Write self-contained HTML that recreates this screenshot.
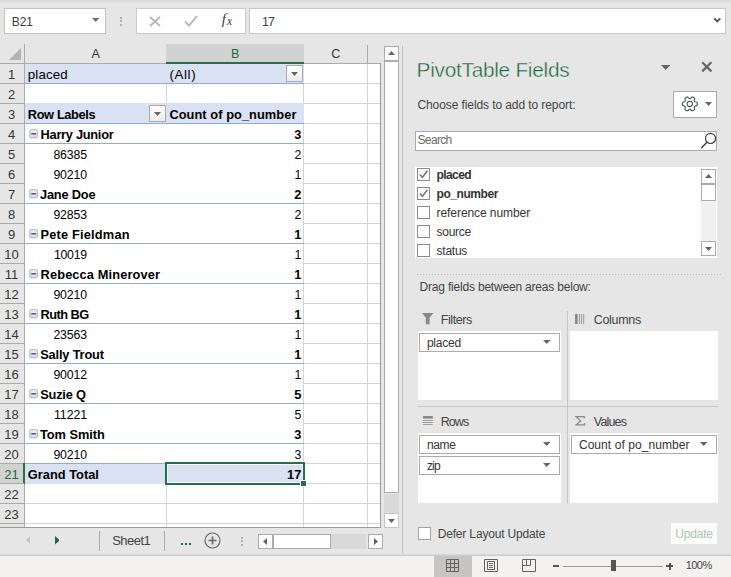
<!DOCTYPE html>
<html><head><meta charset="utf-8"><title>Excel PivotTable</title><style>
html,body{margin:0;padding:0;}
body{width:731px;height:577px;overflow:hidden;background:#e6e6e6;font-family:"Liberation Sans",sans-serif;}
#r{position:relative;width:731px;height:577px;overflow:hidden;background:#e6e6e6;}
#r>div,#r>span,#r>svg{position:absolute;display:block;}
.t{white-space:nowrap;}
</style></head><body><div id="r">
<div style="left:0px;top:0px;width:731px;height:4px;background:linear-gradient(#d7d7d7,#dedede 35%,#e4e4e4 75%,#e6e6e6)"></div>
<div style="left:4px;top:8px;width:102px;height:26px;background:#fff;border:1px solid #c2c2c0;box-sizing:border-box"></div>
<span class="t" style="left:11.7px;top:16.30px;font-size:12px;line-height:12px;font-weight:normal;color:#3b3b3b;letter-spacing:-0.020px;">B21</span>
<svg style="left:92px;top:18.2px" width="7.4" height="4" viewBox="0 0 7.4 4"><path d="M0 0H7.4L3.7 4Z" fill="#707070"/></svg>
<div style="left:120px;top:16.5px;width:2px;height:2px;background:#b0b0b0"></div>
<div style="left:120px;top:20.1px;width:2px;height:2px;background:#b0b0b0"></div>
<div style="left:120px;top:23.7px;width:2px;height:2px;background:#b0b0b0"></div>
<div style="left:136px;top:8px;width:110px;height:26px;background:#fff;border:1px solid #cacaca;box-sizing:border-box"></div>
<svg style="left:149px;top:16px" width="12" height="11" viewBox="0 0 12 11"><path d="M1 1L11 10M11 1L1 10" stroke="#b6b6b6" stroke-width="1.8" fill="none"/></svg>
<svg style="left:184.3px;top:15px" width="14" height="12" viewBox="0 0 14 12"><path d="M1 6.5L5 10.5L13 1" stroke="#b6b6b6" stroke-width="1.9" fill="none"/></svg>
<span class="t" style="left:221.8px;top:12.30px;font-size:15px;line-height:15px;font-weight:normal;color:#3c3c3c;font-family:'Liberation Serif';font-style:italic;">f</span>
<span class="t" style="left:227.0px;top:16.30px;font-size:11.5px;line-height:11.5px;font-weight:normal;color:#3c3c3c;font-family:'Liberation Serif';font-style:italic;">x</span>
<div style="left:249px;top:8px;width:477px;height:26px;background:#fff;border:1px solid #c8c8c8;box-sizing:border-box"></div>
<span class="t" style="left:261.90px;top:16.30px;font-size:12.3px;line-height:12.3px;font-weight:normal;color:#3b3b3b;letter-spacing:-0.739px;">17</span>
<svg style="left:713.4px;top:17.2px" width="9" height="7" viewBox="0 0 9 7"><path d="M1.1 1.3L4.2 4.5L7.3 1.3" stroke="#555" stroke-width="1.9" fill="none"/></svg>
<div style="left:25px;top:64px;width:356px;height:464px;background:#fff"></div>
<div style="left:0px;top:44px;width:381px;height:19px;background:#e6e6e6"></div>
<div style="left:166px;top:44px;width:138px;height:18px;background:#d2d2d2"></div>
<div style="left:166px;top:62px;width:138px;height:2px;background:#217346"></div>
<div style="left:0px;top:63px;width:166px;height:1px;background:#ababab"></div>
<div style="left:304px;top:63px;width:77px;height:1px;background:#ababab"></div>
<div style="left:24px;top:44px;width:1px;height:484px;background:#ababab"></div>
<div style="left:367px;top:45px;width:1px;height:18px;background:#ababab"></div>
<svg style="left:8.9px;top:48px" width="12" height="12" viewBox="0 0 12 12"><path d="M12 0V12H0Z" fill="#b2b2b2"/></svg>
<span class="t" style="left:95.8px;transform:translateX(-50%);top:48.30px;font-size:12.6px;line-height:12.6px;font-weight:normal;color:#363636;">A</span>
<span class="t" style="left:235.2px;transform:translateX(-50%);top:48.30px;font-size:12.6px;line-height:12.6px;font-weight:normal;color:#1c6b3f;">B</span>
<span class="t" style="left:335.8px;transform:translateX(-50%);top:48.30px;font-size:12.6px;line-height:12.6px;font-weight:normal;color:#363636;">C</span>
<div style="left:0px;top:83px;width:24px;height:1px;background:#ababab"></div>
<span class="t" style="left:11.6px;transform:translateX(-50%);top:68.30px;font-size:13px;line-height:13px;font-weight:normal;color:#363636;">1</span>
<div style="left:25px;top:83px;width:356px;height:1px;background:#d4d4d4"></div>
<div style="left:0px;top:103px;width:24px;height:1px;background:#ababab"></div>
<span class="t" style="left:11.6px;transform:translateX(-50%);top:88.30px;font-size:13px;line-height:13px;font-weight:normal;color:#363636;">2</span>
<div style="left:25px;top:103px;width:356px;height:1px;background:#d4d4d4"></div>
<div style="left:0px;top:123px;width:24px;height:1px;background:#ababab"></div>
<span class="t" style="left:11.6px;transform:translateX(-50%);top:108.30px;font-size:13px;line-height:13px;font-weight:normal;color:#363636;">3</span>
<div style="left:25px;top:123px;width:356px;height:1px;background:#d4d4d4"></div>
<div style="left:0px;top:143px;width:24px;height:1px;background:#ababab"></div>
<span class="t" style="left:11.6px;transform:translateX(-50%);top:128.30px;font-size:13px;line-height:13px;font-weight:normal;color:#363636;">4</span>
<div style="left:25px;top:143px;width:356px;height:1px;background:#d4d4d4"></div>
<div style="left:0px;top:163px;width:24px;height:1px;background:#ababab"></div>
<span class="t" style="left:11.6px;transform:translateX(-50%);top:148.30px;font-size:13px;line-height:13px;font-weight:normal;color:#363636;">5</span>
<div style="left:25px;top:163px;width:356px;height:1px;background:#d4d4d4"></div>
<div style="left:0px;top:183px;width:24px;height:1px;background:#ababab"></div>
<span class="t" style="left:11.6px;transform:translateX(-50%);top:168.30px;font-size:13px;line-height:13px;font-weight:normal;color:#363636;">6</span>
<div style="left:25px;top:183px;width:356px;height:1px;background:#d4d4d4"></div>
<div style="left:0px;top:203px;width:24px;height:1px;background:#ababab"></div>
<span class="t" style="left:11.6px;transform:translateX(-50%);top:188.30px;font-size:13px;line-height:13px;font-weight:normal;color:#363636;">7</span>
<div style="left:25px;top:203px;width:356px;height:1px;background:#d4d4d4"></div>
<div style="left:0px;top:223px;width:24px;height:1px;background:#ababab"></div>
<span class="t" style="left:11.6px;transform:translateX(-50%);top:208.30px;font-size:13px;line-height:13px;font-weight:normal;color:#363636;">8</span>
<div style="left:25px;top:223px;width:356px;height:1px;background:#d4d4d4"></div>
<div style="left:0px;top:243px;width:24px;height:1px;background:#ababab"></div>
<span class="t" style="left:11.6px;transform:translateX(-50%);top:228.30px;font-size:13px;line-height:13px;font-weight:normal;color:#363636;">9</span>
<div style="left:25px;top:243px;width:356px;height:1px;background:#d4d4d4"></div>
<div style="left:0px;top:263px;width:24px;height:1px;background:#ababab"></div>
<span class="t" style="left:11.6px;transform:translateX(-50%);top:248.30px;font-size:13px;line-height:13px;font-weight:normal;color:#363636;">10</span>
<div style="left:25px;top:263px;width:356px;height:1px;background:#d4d4d4"></div>
<div style="left:0px;top:283px;width:24px;height:1px;background:#ababab"></div>
<span class="t" style="left:11.6px;transform:translateX(-50%);top:268.30px;font-size:13px;line-height:13px;font-weight:normal;color:#363636;">11</span>
<div style="left:25px;top:283px;width:356px;height:1px;background:#d4d4d4"></div>
<div style="left:0px;top:303px;width:24px;height:1px;background:#ababab"></div>
<span class="t" style="left:11.6px;transform:translateX(-50%);top:288.30px;font-size:13px;line-height:13px;font-weight:normal;color:#363636;">12</span>
<div style="left:25px;top:303px;width:356px;height:1px;background:#d4d4d4"></div>
<div style="left:0px;top:323px;width:24px;height:1px;background:#ababab"></div>
<span class="t" style="left:11.6px;transform:translateX(-50%);top:308.30px;font-size:13px;line-height:13px;font-weight:normal;color:#363636;">13</span>
<div style="left:25px;top:323px;width:356px;height:1px;background:#d4d4d4"></div>
<div style="left:0px;top:343px;width:24px;height:1px;background:#ababab"></div>
<span class="t" style="left:11.6px;transform:translateX(-50%);top:328.30px;font-size:13px;line-height:13px;font-weight:normal;color:#363636;">14</span>
<div style="left:25px;top:343px;width:356px;height:1px;background:#d4d4d4"></div>
<div style="left:0px;top:363px;width:24px;height:1px;background:#ababab"></div>
<span class="t" style="left:11.6px;transform:translateX(-50%);top:348.30px;font-size:13px;line-height:13px;font-weight:normal;color:#363636;">15</span>
<div style="left:25px;top:363px;width:356px;height:1px;background:#d4d4d4"></div>
<div style="left:0px;top:383px;width:24px;height:1px;background:#ababab"></div>
<span class="t" style="left:11.6px;transform:translateX(-50%);top:368.30px;font-size:13px;line-height:13px;font-weight:normal;color:#363636;">16</span>
<div style="left:25px;top:383px;width:356px;height:1px;background:#d4d4d4"></div>
<div style="left:0px;top:403px;width:24px;height:1px;background:#ababab"></div>
<span class="t" style="left:11.6px;transform:translateX(-50%);top:388.30px;font-size:13px;line-height:13px;font-weight:normal;color:#363636;">17</span>
<div style="left:25px;top:403px;width:356px;height:1px;background:#d4d4d4"></div>
<div style="left:0px;top:423px;width:24px;height:1px;background:#ababab"></div>
<span class="t" style="left:11.6px;transform:translateX(-50%);top:408.30px;font-size:13px;line-height:13px;font-weight:normal;color:#363636;">18</span>
<div style="left:25px;top:423px;width:356px;height:1px;background:#d4d4d4"></div>
<div style="left:0px;top:443px;width:24px;height:1px;background:#ababab"></div>
<span class="t" style="left:11.6px;transform:translateX(-50%);top:428.30px;font-size:13px;line-height:13px;font-weight:normal;color:#363636;">19</span>
<div style="left:25px;top:443px;width:356px;height:1px;background:#d4d4d4"></div>
<div style="left:0px;top:463px;width:24px;height:1px;background:#ababab"></div>
<span class="t" style="left:11.6px;transform:translateX(-50%);top:448.30px;font-size:13px;line-height:13px;font-weight:normal;color:#363636;">20</span>
<div style="left:25px;top:463px;width:356px;height:1px;background:#d4d4d4"></div>
<div style="left:0px;top:464px;width:24px;height:19px;background:#d2d2d2"></div>
<div style="left:23px;top:463px;width:2px;height:21px;background:#217346"></div>
<div style="left:0px;top:483px;width:24px;height:1px;background:#ababab"></div>
<span class="t" style="left:11.6px;transform:translateX(-50%);top:468.30px;font-size:13px;line-height:13px;font-weight:normal;color:#1c6b3f;">21</span>
<div style="left:25px;top:483px;width:356px;height:1px;background:#d4d4d4"></div>
<div style="left:0px;top:503px;width:24px;height:1px;background:#ababab"></div>
<span class="t" style="left:11.6px;transform:translateX(-50%);top:488.30px;font-size:13px;line-height:13px;font-weight:normal;color:#363636;">22</span>
<div style="left:25px;top:503px;width:356px;height:1px;background:#d4d4d4"></div>
<div style="left:0px;top:523px;width:24px;height:1px;background:#ababab"></div>
<span class="t" style="left:11.6px;transform:translateX(-50%);top:508.30px;font-size:13px;line-height:13px;font-weight:normal;color:#363636;">23</span>
<div style="left:25px;top:523px;width:356px;height:1px;background:#d4d4d4"></div>
<div style="left:166px;top:64px;width:1px;height:464px;background:#d4d4d4"></div>
<div style="left:303px;top:64px;width:1px;height:464px;background:#d4d4d4"></div>
<div style="left:367px;top:64px;width:1px;height:464px;background:#d4d4d4"></div>
<div style="left:380px;top:63px;width:1px;height:465px;background:#9b9b9b"></div>
<div style="left:0px;top:527px;width:381px;height:1px;background:#9b9b9b"></div>
<div style="left:25px;top:124px;width:278px;height:339px;background:#fff"></div>
<div style="left:25px;top:64px;width:279px;height:19px;background:#d9e1f2"></div>
<div style="left:25px;top:83px;width:279px;height:1px;background:#8ea9db"></div>
<div style="left:25px;top:103px;width:279px;height:20px;background:#d9e1f2"></div>
<div style="left:25px;top:123px;width:279px;height:1px;background:#8ea9db"></div>
<div style="left:25px;top:464px;width:279px;height:20px;background:#d9e1f2"></div>
<div style="left:25px;top:463px;width:279px;height:1px;background:#8ea9db"></div>
<div style="left:25px;top:143px;width:279px;height:1px;background:#8ea9db"></div>
<div style="left:25px;top:203px;width:279px;height:1px;background:#8ea9db"></div>
<div style="left:25px;top:243px;width:279px;height:1px;background:#8ea9db"></div>
<div style="left:25px;top:283px;width:279px;height:1px;background:#8ea9db"></div>
<div style="left:25px;top:323px;width:279px;height:1px;background:#8ea9db"></div>
<div style="left:25px;top:363px;width:279px;height:1px;background:#8ea9db"></div>
<div style="left:25px;top:403px;width:279px;height:1px;background:#8ea9db"></div>
<div style="left:25px;top:443px;width:279px;height:1px;background:#8ea9db"></div>
<span class="t" style="left:27.80px;top:68.30px;font-size:13.3px;line-height:13.3px;font-weight:normal;color:#000;letter-spacing:0.122px;">placed</span>
<span class="t" style="left:169.40px;top:68.30px;font-size:13.3px;line-height:13.3px;font-weight:normal;color:#000;letter-spacing:0.649px;">(All)</span>
<div style="left:286px;top:65px;width:17px;height:17px;background:linear-gradient(#fff,#ececec);border:1px solid #ababab;box-sizing:border-box"></div>
<svg style="left:291px;top:72px" width="7" height="4" viewBox="0 0 7 4"><path d="M0 0H7L3.5 4Z" fill="#666"/></svg>
<span class="t" style="left:27.80px;top:109.30px;font-size:12.8px;line-height:12.8px;font-weight:bold;color:#000;letter-spacing:-0.366px;">Row Labels</span>
<div style="left:149px;top:105px;width:17px;height:17px;background:linear-gradient(#fff,#ececec);border:1px solid #ababab;box-sizing:border-box"></div>
<svg style="left:154px;top:112px" width="7" height="4" viewBox="0 0 7 4"><path d="M0 0H7L3.5 4Z" fill="#666"/></svg>
<span class="t" style="left:169.40px;top:109.30px;font-size:12.8px;line-height:12.8px;font-weight:bold;color:#000;letter-spacing:0.068px;">Count of po_number</span>
<svg style="left:29px;top:129px" width="9" height="10" viewBox="0 0 9 10"><defs><linearGradient id="cg4" x1="0" y1="0" x2="0" y2="1"><stop offset="0" stop-color="#f4f4f4"/><stop offset="1" stop-color="#dadada"/></linearGradient></defs><rect x="0.8" y="0.8" width="7.6" height="8" rx="1.2" fill="url(#cg4)" stroke="#a6b1cb" stroke-width="1"/><path d="M2.2 4.8H7" stroke="#30397c" stroke-width="1.25"/></svg>
<span class="t" style="left:40.60px;top:129.30px;font-size:12.8px;line-height:12.8px;font-weight:bold;color:#000;letter-spacing:-0.274px;">Harry Junior</span>
<span class="t" style="right:429.7px;top:129.30px;font-size:12.8px;line-height:12.8px;font-weight:bold;color:#000;">3</span>
<svg style="left:29px;top:189px" width="9" height="10" viewBox="0 0 9 10"><defs><linearGradient id="cg7" x1="0" y1="0" x2="0" y2="1"><stop offset="0" stop-color="#f4f4f4"/><stop offset="1" stop-color="#dadada"/></linearGradient></defs><rect x="0.8" y="0.8" width="7.6" height="8" rx="1.2" fill="url(#cg7)" stroke="#a6b1cb" stroke-width="1"/><path d="M2.2 4.8H7" stroke="#30397c" stroke-width="1.25"/></svg>
<span class="t" style="left:40.00px;top:189.30px;font-size:12.8px;line-height:12.8px;font-weight:bold;color:#000;letter-spacing:-0.197px;">Jane Doe</span>
<span class="t" style="right:429.7px;top:189.30px;font-size:12.8px;line-height:12.8px;font-weight:bold;color:#000;">2</span>
<svg style="left:29px;top:229px" width="9" height="10" viewBox="0 0 9 10"><defs><linearGradient id="cg9" x1="0" y1="0" x2="0" y2="1"><stop offset="0" stop-color="#f4f4f4"/><stop offset="1" stop-color="#dadada"/></linearGradient></defs><rect x="0.8" y="0.8" width="7.6" height="8" rx="1.2" fill="url(#cg9)" stroke="#a6b1cb" stroke-width="1"/><path d="M2.2 4.8H7" stroke="#30397c" stroke-width="1.25"/></svg>
<span class="t" style="left:40.60px;top:229.30px;font-size:12.8px;line-height:12.8px;font-weight:bold;color:#000;letter-spacing:0.180px;">Pete Fieldman</span>
<span class="t" style="right:429.7px;top:229.30px;font-size:12.8px;line-height:12.8px;font-weight:bold;color:#000;">1</span>
<svg style="left:29px;top:269px" width="9" height="10" viewBox="0 0 9 10"><defs><linearGradient id="cg11" x1="0" y1="0" x2="0" y2="1"><stop offset="0" stop-color="#f4f4f4"/><stop offset="1" stop-color="#dadada"/></linearGradient></defs><rect x="0.8" y="0.8" width="7.6" height="8" rx="1.2" fill="url(#cg11)" stroke="#a6b1cb" stroke-width="1"/><path d="M2.2 4.8H7" stroke="#30397c" stroke-width="1.25"/></svg>
<span class="t" style="left:40.60px;top:269.30px;font-size:12.8px;line-height:12.8px;font-weight:bold;color:#000;letter-spacing:0.120px;">Rebecca Minerover</span>
<span class="t" style="right:429.7px;top:269.30px;font-size:12.8px;line-height:12.8px;font-weight:bold;color:#000;">1</span>
<svg style="left:29px;top:309px" width="9" height="10" viewBox="0 0 9 10"><defs><linearGradient id="cg13" x1="0" y1="0" x2="0" y2="1"><stop offset="0" stop-color="#f4f4f4"/><stop offset="1" stop-color="#dadada"/></linearGradient></defs><rect x="0.8" y="0.8" width="7.6" height="8" rx="1.2" fill="url(#cg13)" stroke="#a6b1cb" stroke-width="1"/><path d="M2.2 4.8H7" stroke="#30397c" stroke-width="1.25"/></svg>
<span class="t" style="left:40.60px;top:309.30px;font-size:12.8px;line-height:12.8px;font-weight:bold;color:#000;letter-spacing:-0.539px;">Ruth BG</span>
<span class="t" style="right:429.7px;top:309.30px;font-size:12.8px;line-height:12.8px;font-weight:bold;color:#000;">1</span>
<svg style="left:29px;top:349px" width="9" height="10" viewBox="0 0 9 10"><defs><linearGradient id="cg15" x1="0" y1="0" x2="0" y2="1"><stop offset="0" stop-color="#f4f4f4"/><stop offset="1" stop-color="#dadada"/></linearGradient></defs><rect x="0.8" y="0.8" width="7.6" height="8" rx="1.2" fill="url(#cg15)" stroke="#a6b1cb" stroke-width="1"/><path d="M2.2 4.8H7" stroke="#30397c" stroke-width="1.25"/></svg>
<span class="t" style="left:40.20px;top:349.30px;font-size:12.8px;line-height:12.8px;font-weight:bold;color:#000;letter-spacing:-0.166px;">Sally Trout</span>
<span class="t" style="right:429.7px;top:349.30px;font-size:12.8px;line-height:12.8px;font-weight:bold;color:#000;">1</span>
<svg style="left:29px;top:389px" width="9" height="10" viewBox="0 0 9 10"><defs><linearGradient id="cg17" x1="0" y1="0" x2="0" y2="1"><stop offset="0" stop-color="#f4f4f4"/><stop offset="1" stop-color="#dadada"/></linearGradient></defs><rect x="0.8" y="0.8" width="7.6" height="8" rx="1.2" fill="url(#cg17)" stroke="#a6b1cb" stroke-width="1"/><path d="M2.2 4.8H7" stroke="#30397c" stroke-width="1.25"/></svg>
<span class="t" style="left:40.20px;top:389.30px;font-size:12.8px;line-height:12.8px;font-weight:bold;color:#000;letter-spacing:-0.196px;">Suzie Q</span>
<span class="t" style="right:429.7px;top:389.30px;font-size:12.8px;line-height:12.8px;font-weight:bold;color:#000;">5</span>
<svg style="left:29px;top:429px" width="9" height="10" viewBox="0 0 9 10"><defs><linearGradient id="cg19" x1="0" y1="0" x2="0" y2="1"><stop offset="0" stop-color="#f4f4f4"/><stop offset="1" stop-color="#dadada"/></linearGradient></defs><rect x="0.8" y="0.8" width="7.6" height="8" rx="1.2" fill="url(#cg19)" stroke="#a6b1cb" stroke-width="1"/><path d="M2.2 4.8H7" stroke="#30397c" stroke-width="1.25"/></svg>
<span class="t" style="left:40.00px;top:429.30px;font-size:12.8px;line-height:12.8px;font-weight:bold;color:#000;letter-spacing:-0.031px;">Tom Smith</span>
<span class="t" style="right:429.7px;top:429.30px;font-size:12.8px;line-height:12.8px;font-weight:bold;color:#000;">3</span>
<span class="t" style="left:53.40px;top:149.30px;font-size:12.3px;line-height:12.3px;font-weight:normal;color:#000;letter-spacing:-0.114px;">86385</span>
<span class="t" style="right:429.7px;top:149.30px;font-size:12.3px;line-height:12.3px;font-weight:normal;color:#000;">2</span>
<span class="t" style="left:53.40px;top:169.30px;font-size:12.3px;line-height:12.3px;font-weight:normal;color:#000;letter-spacing:-0.114px;">90210</span>
<span class="t" style="right:429.7px;top:169.30px;font-size:12.3px;line-height:12.3px;font-weight:normal;color:#000;">1</span>
<span class="t" style="left:53.40px;top:209.30px;font-size:12.3px;line-height:12.3px;font-weight:normal;color:#000;letter-spacing:-0.114px;">92853</span>
<span class="t" style="right:429.7px;top:209.30px;font-size:12.3px;line-height:12.3px;font-weight:normal;color:#000;">2</span>
<span class="t" style="left:53.90px;top:249.30px;font-size:12.3px;line-height:12.3px;font-weight:normal;color:#000;letter-spacing:-0.239px;">10019</span>
<span class="t" style="right:429.7px;top:249.30px;font-size:12.3px;line-height:12.3px;font-weight:normal;color:#000;">1</span>
<span class="t" style="left:53.40px;top:289.30px;font-size:12.3px;line-height:12.3px;font-weight:normal;color:#000;letter-spacing:-0.114px;">90210</span>
<span class="t" style="right:429.7px;top:289.30px;font-size:12.3px;line-height:12.3px;font-weight:normal;color:#000;">1</span>
<span class="t" style="left:53.40px;top:329.30px;font-size:12.3px;line-height:12.3px;font-weight:normal;color:#000;letter-spacing:-0.114px;">23563</span>
<span class="t" style="right:429.7px;top:329.30px;font-size:12.3px;line-height:12.3px;font-weight:normal;color:#000;">1</span>
<span class="t" style="left:53.40px;top:369.30px;font-size:12.3px;line-height:12.3px;font-weight:normal;color:#000;letter-spacing:-0.114px;">90012</span>
<span class="t" style="right:429.7px;top:369.30px;font-size:12.3px;line-height:12.3px;font-weight:normal;color:#000;">1</span>
<span class="t" style="left:53.90px;top:409.30px;font-size:12.3px;line-height:12.3px;font-weight:normal;color:#000;letter-spacing:-0.011px;">11221</span>
<span class="t" style="right:429.7px;top:409.30px;font-size:12.3px;line-height:12.3px;font-weight:normal;color:#000;">5</span>
<span class="t" style="left:53.40px;top:449.30px;font-size:12.3px;line-height:12.3px;font-weight:normal;color:#000;letter-spacing:-0.114px;">90210</span>
<span class="t" style="right:429.7px;top:449.30px;font-size:12.3px;line-height:12.3px;font-weight:normal;color:#000;">3</span>
<span class="t" style="left:27.80px;top:469.30px;font-size:12.8px;line-height:12.8px;font-weight:bold;color:#000;letter-spacing:0.020px;">Grand Total</span>
<span class="t" style="right:429.7px;top:469.30px;font-size:12.8px;line-height:12.8px;font-weight:bold;color:#000;">17</span>
<div style="left:165px;top:462px;width:140px;height:23px;border:2px solid #217346;box-sizing:border-box"></div>
<div style="left:167px;top:464px;width:136px;height:19px;border:1px solid rgba(255,255,255,0.75);box-sizing:border-box"></div>
<div style="left:300px;top:480px;width:7px;height:7px;background:#217346;border:1px solid #fff;box-sizing:border-box"></div>
<div style="left:384px;top:46px;width:15px;height:15px;background:#fff;border:1px solid #ababab;box-sizing:border-box"></div>
<svg style="left:388px;top:51px" width="7" height="4" viewBox="0 0 7 4"><path d="M0 4H7L3.5 0Z" fill="#666"/></svg>
<div style="left:384px;top:61px;width:15px;height:432px;background:#fff;border:1px solid #ababab;box-sizing:border-box"></div>
<div style="left:384px;top:494px;width:15px;height:19px;background:#d9d9d9"></div>
<div style="left:384px;top:513px;width:15px;height:15px;background:#fff;border:1px solid #c6c6c6;box-sizing:border-box"></div>
<svg style="left:388px;top:519px" width="7" height="4" viewBox="0 0 7 4"><path d="M0 0H7L3.5 4Z" fill="#666"/></svg>
<svg style="left:25.6px;top:536.3px" width="4.8" height="8.2" viewBox="0 0 4.8 8.2"><path d="M4.8 0V8.2L0 4.1Z" fill="#c2c2c2"/></svg>
<svg style="left:54.7px;top:536.3px" width="4.8" height="8.4" viewBox="0 0 4.8 8.4"><path d="M0 0V8.4L4.8 4.2Z" fill="#1a6a3e"/></svg>
<div style="left:99px;top:531px;width:1px;height:20px;background:#ababab"></div>
<span class="t" style="left:112.2px;top:534.30px;font-size:13px;line-height:13px;font-weight:normal;color:#444;letter-spacing:-0.534px;">Sheet1</span>
<div style="left:164px;top:531px;width:1px;height:20px;background:#ababab"></div>
<div style="left:181px;top:543px;width:2px;height:2px;background:#217346"></div>
<div style="left:185px;top:543px;width:2px;height:2px;background:#217346"></div>
<div style="left:189px;top:543px;width:2px;height:2px;background:#217346"></div>
<svg style="left:204.2px;top:532.3px" width="17" height="17" viewBox="0 0 17 17"><circle cx="8.5" cy="8.5" r="7.5" fill="none" stroke="#6a6a6a" stroke-width="1.2"/><path d="M8.5 4.5V12.5M4.5 8.5H12.5" stroke="#6a6a6a" stroke-width="1.7"/></svg>
<div style="left:241px;top:536.5px;width:2px;height:2px;background:#b0b0b0"></div>
<div style="left:241px;top:540.1px;width:2px;height:2px;background:#b0b0b0"></div>
<div style="left:241px;top:543.7px;width:2px;height:2px;background:#b0b0b0"></div>
<div style="left:258px;top:534px;width:15px;height:15px;background:#fff;border:1px solid #ababab;box-sizing:border-box"></div>
<svg style="left:263px;top:538px" width="4" height="7" viewBox="0 0 4 7"><path d="M4 0V7L0 3.5Z" fill="#636363"/></svg>
<div style="left:273px;top:534px;width:58px;height:15px;background:#fff;border:1px solid #ababab;box-sizing:border-box"></div>
<div style="left:331px;top:534px;width:35px;height:15px;background:#d9d9d9"></div>
<div style="left:368px;top:534px;width:15px;height:15px;background:#fff;border:1px solid #ababab;box-sizing:border-box"></div>
<svg style="left:374px;top:538px" width="4" height="7" viewBox="0 0 4 7"><path d="M0 0V7L4 3.5Z" fill="#636363"/></svg>
<div style="left:402px;top:46px;width:1px;height:507px;background:#c0c0c0"></div>
<span class="t" style="left:416.60px;top:60.30px;font-size:20.8px;line-height:20.8px;font-weight:normal;color:#17653b;-webkit-text-stroke:0.4px #e6e6e6;letter-spacing:-0.263px;">PivotTable Fields</span>
<svg style="left:661px;top:65px" width="9.4" height="5" viewBox="0 0 9.4 5"><path d="M0 0H9.4L4.7 5Z" fill="#666"/></svg>
<svg style="left:701.3px;top:61.3px" width="12" height="12" viewBox="0 0 12 12"><path d="M1.2 1.2L10.4 10.4M10.4 1.2L1.2 10.4" stroke="#666" stroke-width="2.2" fill="none"/></svg>
<span class="t" style="left:417.40px;top:99.30px;font-size:12px;line-height:12px;font-weight:normal;color:#444;letter-spacing:-0.088px;">Choose fields to add to report:</span>
<div style="left:673px;top:91px;width:44px;height:27px;background:#fff;border:1px solid #ababab;box-sizing:border-box"></div>
<svg style="left:681px;top:95px" width="18" height="18" viewBox="-9 -9 18 18"><g fill="none" stroke="#3f4a45" stroke-width="1.05"><circle cx="-0.2" cy="-0.1" r="2.7"/><path d="M7.29 -0.10L7.27 0.29L7.23 0.68L7.13 1.06L6.93 1.42L6.47 1.69L5.76 1.84L5.17 1.96L4.84 2.14L4.63 2.36L4.48 2.60L4.35 2.85L4.26 3.14L4.27 3.52L4.46 4.10L4.68 4.78L4.68 5.32L4.47 5.67L4.19 5.94L3.88 6.18L3.54 6.38L3.20 6.57L2.84 6.72L2.46 6.83L2.05 6.83L1.59 6.57L1.10 6.03L0.70 5.58L0.38 5.38L0.08 5.32L-0.20 5.30L-0.48 5.32L-0.78 5.38L-1.10 5.58L-1.50 6.03L-1.99 6.57L-2.45 6.83L-2.86 6.83L-3.24 6.72L-3.60 6.57L-3.94 6.38L-4.28 6.18L-4.59 5.94L-4.87 5.67L-5.08 5.32L-5.08 4.78L-4.86 4.10L-4.67 3.52L-4.66 3.14L-4.75 2.85L-4.88 2.60L-5.03 2.36L-5.24 2.14L-5.57 1.96L-6.16 1.84L-6.87 1.69L-7.33 1.42L-7.53 1.06L-7.63 0.68L-7.67 0.29L-7.69 -0.10L-7.67 -0.49L-7.63 -0.88L-7.53 -1.26L-7.33 -1.62L-6.87 -1.89L-6.16 -2.04L-5.57 -2.16L-5.24 -2.34L-5.03 -2.56L-4.88 -2.80L-4.75 -3.05L-4.66 -3.34L-4.67 -3.72L-4.86 -4.30L-5.08 -4.98L-5.08 -5.52L-4.87 -5.87L-4.59 -6.14L-4.28 -6.38L-3.94 -6.58L-3.60 -6.77L-3.24 -6.92L-2.86 -7.03L-2.45 -7.03L-1.99 -6.77L-1.50 -6.23L-1.10 -5.78L-0.78 -5.58L-0.48 -5.52L-0.20 -5.50L0.08 -5.52L0.38 -5.58L0.70 -5.78L1.10 -6.23L1.59 -6.77L2.05 -7.03L2.46 -7.03L2.84 -6.92L3.20 -6.77L3.54 -6.58L3.88 -6.38L4.19 -6.14L4.47 -5.87L4.68 -5.52L4.68 -4.98L4.46 -4.30L4.27 -3.72L4.26 -3.34L4.35 -3.05L4.48 -2.80L4.63 -2.56L4.84 -2.34L5.17 -2.16L5.76 -2.04L6.47 -1.89L6.93 -1.62L7.13 -1.26L7.23 -0.88L7.27 -0.49Z" stroke-linejoin="round"/></g></svg>
<svg style="left:705px;top:102px" width="7" height="4" viewBox="0 0 7 4"><path d="M0 0H7L3.5 4Z" fill="#666"/></svg>
<div style="left:415px;top:131px;width:302px;height:20px;background:#fff;border:1px solid #ababab;box-sizing:border-box"></div>
<span class="t" style="left:417.50px;top:134.30px;font-size:12px;line-height:12px;font-weight:normal;color:#6a6a6a;letter-spacing:-0.650px;">Search</span>
<svg style="left:700px;top:132px" width="18" height="18" viewBox="0 0 18 18"><circle cx="10.5" cy="6.4" r="5.05" fill="none" stroke="#3d3d3d" stroke-width="1.15"/><path d="M6.9 10.2L1.2 16.2" stroke="#3d3d3d" stroke-width="1.35"/></svg>
<div style="left:415px;top:167px;width:302px;height:91px;background:#fff"></div>
<div style="left:417px;top:168px;width:13px;height:13px;background:#fff;border:1px solid #8a8a8a;box-sizing:border-box"></div>
<svg style="left:417px;top:168px" width="13" height="13" viewBox="0 0 13 13"><path d="M2.9 6.6L5.4 9.4L10.4 2.7" stroke="#6e6e6e" stroke-width="1.55" fill="none"/></svg>
<span class="t" style="left:436.60px;top:169.30px;font-size:12px;line-height:12px;font-weight:bold;color:#333;letter-spacing:-0.617px;">placed</span>
<div style="left:417px;top:187px;width:13px;height:13px;background:#fff;border:1px solid #8a8a8a;box-sizing:border-box"></div>
<svg style="left:417px;top:187px" width="13" height="13" viewBox="0 0 13 13"><path d="M2.9 6.6L5.4 9.4L10.4 2.7" stroke="#6e6e6e" stroke-width="1.55" fill="none"/></svg>
<span class="t" style="left:436.60px;top:188.30px;font-size:12px;line-height:12px;font-weight:bold;color:#333;letter-spacing:-0.446px;">po_number</span>
<div style="left:417px;top:206px;width:13px;height:13px;background:#fff;border:1px solid #8a8a8a;box-sizing:border-box"></div>
<span class="t" style="left:436.60px;top:207.30px;font-size:12px;line-height:12px;font-weight:normal;color:#333;letter-spacing:-0.075px;">reference number</span>
<div style="left:417px;top:225px;width:13px;height:13px;background:#fff;border:1px solid #8a8a8a;box-sizing:border-box"></div>
<span class="t" style="left:436.60px;top:226.30px;font-size:12px;line-height:12px;font-weight:normal;color:#333;letter-spacing:-0.309px;">source</span>
<div style="left:417px;top:244px;width:13px;height:13px;background:#fff;border:1px solid #8a8a8a;box-sizing:border-box"></div>
<span class="t" style="left:436.60px;top:245.30px;font-size:12px;line-height:12px;font-weight:normal;color:#333;letter-spacing:-0.263px;">status</span>
<div style="left:701px;top:169px;width:15px;height:87px;background:#f0f0f0"></div>
<div style="left:701px;top:169px;width:15px;height:15px;background:#fff;border:1px solid #ababab;box-sizing:border-box"></div>
<svg style="left:705px;top:174px" width="7" height="4" viewBox="0 0 7 4"><path d="M0 4H7L3.5 0Z" fill="#666"/></svg>
<div style="left:701px;top:184px;width:15px;height:17px;background:#fff;border:1px solid #ababab;box-sizing:border-box"></div>
<div style="left:701px;top:241px;width:15px;height:15px;background:#fff;border:1px solid #ababab;box-sizing:border-box"></div>
<svg style="left:705px;top:247px" width="7" height="4" viewBox="0 0 7 4"><path d="M0 0H7L3.5 4Z" fill="#666"/></svg>
<div style="left:417px;top:274px;width:304px;height:1px;background:repeating-linear-gradient(90deg,#bcbcbc 0 1px,transparent 1px 3px)"></div>
<span class="t" style="left:419.60px;top:281.30px;font-size:12px;line-height:12px;font-weight:normal;color:#444;letter-spacing:-0.197px;">Drag fields between areas below:</span>
<div style="left:418px;top:331px;width:143px;height:69px;background:#fff"></div>
<div style="left:570px;top:331px;width:148px;height:69px;background:#fff"></div>
<div style="left:418px;top:433px;width:143px;height:70px;background:#fff"></div>
<div style="left:570px;top:433px;width:148px;height:70px;background:#fff"></div>
<div style="left:567px;top:311px;width:1px;height:192px;background:#c6c6c6"></div>
<div style="left:418px;top:406px;width:300px;height:1px;background:#c6c6c6"></div>
<svg style="left:421.6px;top:312.8px" width="12" height="12" viewBox="0 0 12 12"><path d="M0 0H11.4L7.6 4.8V11.2H3.8V4.8Z" fill="#8a8a8a"/></svg>
<span class="t" style="left:440.80px;top:314.30px;font-size:12.5px;line-height:12.5px;font-weight:normal;color:#444;letter-spacing:-0.446px;">Filters</span>
<svg style="left:574.5px;top:314px" width="10" height="10" viewBox="0 0 10 10"><path d="M0 0H2.7V10H0Z" fill="#8a8a8a"/><path d="M4 0H5V10H4ZM6.1 0H7.1V10H6.1ZM8.2 0H9.2V10H8.2Z" fill="#9c9c9c"/></svg>
<span class="t" style="left:593.80px;top:314.30px;font-size:12.5px;line-height:12.5px;font-weight:normal;color:#444;letter-spacing:-0.329px;">Columns</span>
<svg style="left:423px;top:416px" width="10" height="10" viewBox="0 0 10 10"><path d="M0 0H9.8V2.6H0Z" fill="#8a8a8a"/><path d="M0 4H9.8V5H0ZM0 6H9.8V7H0ZM0 8H9.8V9H0Z" fill="#a0a0a0"/></svg>
<span class="t" style="left:440.80px;top:416.30px;font-size:12.5px;line-height:12.5px;font-weight:normal;color:#444;letter-spacing:-0.969px;">Rows</span>
<svg style="left:575px;top:416px" width="11" height="10" viewBox="0 0 11 10"><path d="M9.3 2.6V0.7H1.2L5.6 4.9L1.2 8.9H9.5V7" fill="none" stroke="#8a8a8a" stroke-width="1.3"/></svg>
<span class="t" style="left:593.80px;top:416.30px;font-size:12.5px;line-height:12.5px;font-weight:normal;color:#444;letter-spacing:-0.828px;">Values</span>
<div style="left:419px;top:333px;width:141px;height:19px;background:#fff;border:1px solid #ababab;box-sizing:border-box"></div>
<span class="t" style="left:426.90px;top:337.30px;font-size:12px;line-height:12px;font-weight:normal;color:#333;letter-spacing:-0.237px;">placed</span>
<svg style="left:542.5px;top:340px" width="7.4" height="4" viewBox="0 0 7.4 4"><path d="M0 0H7.4L3.7 4Z" fill="#666"/></svg>
<div style="left:419px;top:435px;width:141px;height:19px;background:#fff;border:1px solid #ababab;box-sizing:border-box"></div>
<span class="t" style="left:426.90px;top:439.30px;font-size:12px;line-height:12px;font-weight:normal;color:#333;letter-spacing:-0.348px;">name</span>
<svg style="left:542.5px;top:442px" width="7.4" height="4" viewBox="0 0 7.4 4"><path d="M0 0H7.4L3.7 4Z" fill="#666"/></svg>
<div style="left:419px;top:456px;width:141px;height:19px;background:#fff;border:1px solid #ababab;box-sizing:border-box"></div>
<span class="t" style="left:426.90px;top:460.30px;font-size:12px;line-height:12px;font-weight:normal;color:#333;letter-spacing:-0.833px;">zip</span>
<svg style="left:542.5px;top:463px" width="7.4" height="4" viewBox="0 0 7.4 4"><path d="M0 0H7.4L3.7 4Z" fill="#666"/></svg>
<div style="left:571px;top:435px;width:146px;height:19px;background:#fff;border:1px solid #ababab;box-sizing:border-box"></div>
<span class="t" style="left:578.90px;top:439.30px;font-size:12px;line-height:12px;font-weight:normal;color:#333;letter-spacing:0.070px;">Count of po_number</span>
<svg style="left:699.5px;top:442px" width="7.4" height="4" viewBox="0 0 7.4 4"><path d="M0 0H7.4L3.7 4Z" fill="#666"/></svg>
<div style="left:418px;top:527px;width:13px;height:13px;background:#fff;border:1px solid #a2a2a2;box-sizing:border-box"></div>
<span class="t" style="left:437.7px;top:528.30px;font-size:12px;line-height:12px;font-weight:normal;color:#444;letter-spacing:-0.166px;">Defer Layout Update</span>
<div style="left:671px;top:523px;width:46px;height:21px;background:#fdfdfd"></div>
<span class="t" style="left:675.2px;top:528.30px;font-size:12px;line-height:12px;font-weight:normal;color:#a9c3b3;letter-spacing:-0.184px;">Update</span>
<div style="left:0px;top:554px;width:731px;height:1px;background:#d9d9d9"></div>
<div style="left:0px;top:555px;width:731px;height:1px;background:#cbcbcb"></div>
<div style="left:0px;top:556px;width:731px;height:21px;background:#f3f2f1"></div>
<div style="left:434px;top:556px;width:38px;height:21px;background:#c6c5c3"></div>
<svg style="left:446px;top:559px" width="13" height="13" viewBox="0 0 13 13"><path d="M0.5 0.5H12.5V12.5H0.5ZM4.5 0.5V12.5M8.5 0.5V12.5M0.5 4.5H12.5M0.5 8.5H12.5" fill="none" stroke="#646464" stroke-width="1"/></svg>
<svg style="left:484px;top:559px" width="14" height="13" viewBox="0 0 14 13"><path d="M0.5 0.5H13.5V12.5H0.5Z" fill="none" stroke="#646464"/><path d="M3.5 2.5H10.5V10.5H3.5Z" fill="none" stroke="#646464"/><path d="M5 4.5H9M5 6.5H9M5 8.5H9" stroke="#646464" stroke-width="0.9"/></svg>
<svg style="left:522px;top:559px" width="14" height="13" viewBox="0 0 14 13"><path d="M0.5 0.5H13.5V12.5H0.5Z" fill="none" stroke="#646464"/><path d="M0.5 6.5H8.5V0.5M4.5 0.5V6.5" fill="none" stroke="#646464"/></svg>
<div style="left:553px;top:565px;width:6px;height:2px;background:#555"></div>
<div style="left:563px;top:566px;width:100px;height:1px;background:#9a9a9a"></div>
<div style="left:611px;top:560px;width:5px;height:11px;background:#555"></div>
<div style="left:666.4px;top:565px;width:7px;height:2px;background:#555"></div>
<div style="left:668.9px;top:562.5px;width:2px;height:7px;background:#555"></div>
<span class="t" style="left:685.7px;top:560.30px;font-size:11px;line-height:11px;font-weight:normal;color:#444;letter-spacing:-0.535px;">100%</span>
</div></body></html>
